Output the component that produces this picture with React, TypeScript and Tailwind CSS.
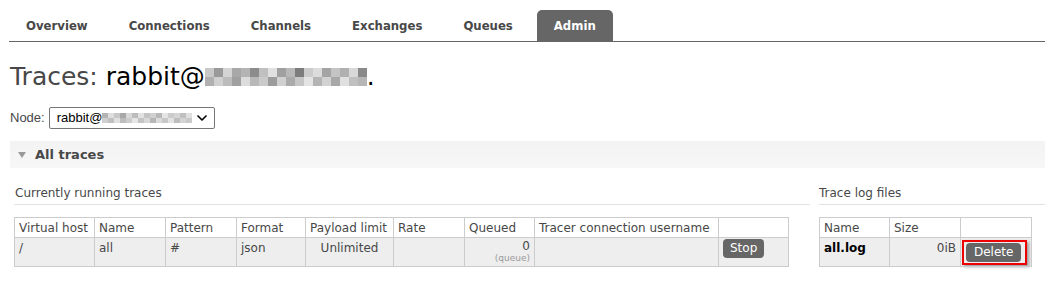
import { ChevronDown } from 'lucide-react';

const titleBlocks = [
  ['bg-[#c8c8c8]', 'bg-[#9a9a9a]', 'bg-[#d4d4d4]', 'bg-[#a8a8a8]', 'bg-[#b4b4b4]', 'bg-[#8c8c8c]', 'bg-[#c0c0c0]', 'bg-[#e0e0e0]', 'bg-[#a0a0a0]', 'bg-[#b8b8b8]', 'bg-[#7c7c7c]', 'bg-[#cccccc]', 'bg-[#dcdcdc]', 'bg-[#a4a4a4]', 'bg-[#c4c4c4]', 'bg-[#b0b0b0]', 'bg-[#d8d8d8]', 'bg-[#8a8a8a]'],
  ['bg-[#b0b0b0]', 'bg-[#d0d0d0]', 'bg-[#bcbcbc]', 'bg-[#a0a0a0]', 'bg-[#dcdcdc]', 'bg-[#b8b8b8]', 'bg-[#cacaca]', 'bg-[#9c9c9c]', 'bg-[#d0d0d0]', 'bg-[#aaaaaa]', 'bg-[#c6c6c6]', 'bg-[#e4e4e4]', 'bg-[#b4b4b4]', 'bg-[#d2d2d2]', 'bg-[#a8a8a8]', 'bg-[#e0e0e0]', 'bg-[#c0c0c0]', 'bg-[#b6b6b6]'],
];

const nodeBlocks = [
  ['bg-[#b4b4b4]', 'bg-[#dedede]', 'bg-[#c8c8c8]', 'bg-[#a8a8a8]', 'bg-[#d8d8d8]', 'bg-[#bcbcbc]', 'bg-[#e2e2e2]', 'bg-[#c4c4c4]', 'bg-[#d0d0d0]', 'bg-[#b8b8b8]', 'bg-[#e4e4e4]', 'bg-[#cccccc]', 'bg-[#d6d6d6]', 'bg-[#c0c0c0]', 'bg-[#e0e0e0]'],
  ['bg-[#d0d0d0]', 'bg-[#c0c0c0]', 'bg-[#e0e0e0]', 'bg-[#bcbcbc]', 'bg-[#cccccc]', 'bg-[#e6e6e6]', 'bg-[#c4c4c4]', 'bg-[#d8d8d8]', 'bg-[#b6b6b6]', 'bg-[#dadada]', 'bg-[#c8c8c8]', 'bg-[#e2e2e2]', 'bg-[#bebebe]', 'bg-[#d4d4d4]', 'bg-[#cacaca]'],
];

const tabs = ['Overview', 'Connections', 'Channels', 'Exchanges', 'Queues', 'Admin'];

const traceCols = [
  { label: 'Virtual host', w: 'w-[80px]' },
  { label: 'Name', w: 'w-[71px]' },
  { label: 'Pattern', w: 'w-[71px]' },
  { label: 'Format', w: 'w-[69px]' },
  { label: 'Payload limit', w: 'w-[88px]' },
  { label: 'Rate', w: 'w-[71px]' },
  { label: 'Queued', w: 'w-[70px]' },
  { label: 'Tracer connection username', w: 'w-[184px]' },
  { label: '', w: 'w-[70px]' },
];

function Pixelated({ rows, cell }: { rows: string[][]; cell: string }) {
  return (
    <span className="inline-flex flex-col align-middle">
      {rows.map((row, i) => (
        <span key={i} className="flex">
          {row.map((c, j) => (
            <span key={j} className={`${cell} ${c}`} />
          ))}
        </span>
      ))}
    </span>
  );
}

export default function App() {
  const th = 'border border-[#ccc] px-[4px] h-[20px] text-left font-normal text-[#484848] align-middle';
  const td = 'border border-[#ccc] px-[4px] pt-[1px] align-top h-[29px]';

  return (
    <div className="w-[1045px] h-[281px] overflow-hidden bg-white font-['DejaVu_Sans',Verdana,sans-serif] text-[12px] text-[#484848]">
      {/* Menu */}
      <div className="pt-[10px] pl-[9px]">
        <ul className="flex border-b border-[#666] h-[32px]">
          {tabs.map((t) => (
            <li
              key={t}
              className={
                t === 'Admin'
                  ? "mr-[7px] px-[17px] h-[31px] flex items-center rounded-t-[5px] bg-[#666] text-white font-bold text-[13px] font-['DejaVu_Sans_Condensed',sans-serif]"
                  : "mr-[7px] px-[17px] h-[31px] flex items-center text-[#484848] font-bold text-[13px] font-['DejaVu_Sans_Condensed',sans-serif]"
              }
            >
              {t}
            </li>
          ))}
        </ul>
      </div>

      {/* Title */}
      <h1 className="ml-[10px] mt-[20px] text-[25px] leading-[30px] text-[#484848] flex items-center">
        <span>Traces:&nbsp;</span>
        <span className="text-black">rabbit@</span>
        <Pixelated rows={titleBlocks} cell="w-[9px] h-[9px]" />
        <span className="text-black">.</span>
      </h1>

      {/* Node select */}
      <div className="ml-[10px] mt-[15px] flex items-center gap-[4px] text-[13px] font-['Liberation_Sans',Arial,sans-serif]">
        <span className="text-[#484848]">Node:</span>
        <div className="w-[166px] h-[22px] border border-[#767676] rounded-[2px] flex items-center pl-[7px] pr-[4px] text-black">
          <span>rabbit@</span>
          <Pixelated rows={nodeBlocks} cell="w-[6px] h-[5px]" />
          <ChevronDown className="ml-auto h-[16px] w-[16px] text-black" strokeWidth={2.5} />
        </div>
      </div>

      {/* Section header */}
      <div className="ml-[10px] mt-[12px] h-[27px] bg-gradient-to-b from-[#f3f3f3] to-[#f7f7f7] flex items-center">
        <svg width="10" height="8" viewBox="0 0 10 8" className="ml-[7px]">
          <path d="M1 1 L9 1 L5 7 Z" fill="#9a9a9a" />
        </svg>
        <span className="ml-[8px] font-bold text-[13px] text-[#484848]">All traces</span>
      </div>

      {/* Content */}
      <div className="flex mt-[17px] ml-[14px]">
        <div className="w-[796px]">
          <h3 className="text-[12px] pl-[1px] pb-[3px] border-b border-[#e2e2e2] leading-[16px]">Currently running traces</h3>
          <table className="mt-[12px] border-collapse text-[12px]">
            <thead>
              <tr className="bg-white">
                {traceCols.map((c, i) => (
                  <th key={i} className={`${th} ${c.w}`}>{c.label}</th>
                ))}
              </tr>
            </thead>
            <tbody>
              <tr className="bg-[#eee] text-[#484848]">
                <td className={td}>/</td>
                <td className={td}>all</td>
                <td className={td}>#</td>
                <td className={td}>json</td>
                <td className={`${td} text-center`}>Unlimited</td>
                <td className={td}></td>
                <td className={`${td} text-right leading-[14px]`}>
                  <div>0</div>
                  <div className="text-[9px] text-[#999] leading-[11px]">(queue)</div>
                </td>
                <td className={td}></td>
                <td className={`${td} pl-[4px] align-middle`}>
                  <button className="bg-[#666] text-white rounded-[4px] px-[7px] h-[19px] leading-[19px] text-[12px]">Stop</button>
                </td>
              </tr>
            </tbody>
          </table>
        </div>

        <div className="ml-[9px] flex-1">
          <h3 className="text-[12px] pb-[3px] border-b border-[#e2e2e2] leading-[16px]">Trace log files</h3>
          <table className="mt-[12px] border-collapse text-[12px]">
            <thead>
              <tr className="bg-white">
                <th className={`${th} w-[70px]`}>Name</th>
                <th className={`${th} w-[71px]`}>Size</th>
                <th className={`${th} w-[71px]`}></th>
              </tr>
            </thead>
            <tbody>
              <tr className="bg-[#eee]">
                <td className={`${td} font-bold text-black`}>all.log</td>
                <td className={`${td} text-right`}>0iB</td>
                <td className="border border-[#ccc] p-0 align-middle">
                  <div className="ml-[1px] w-[65px] h-[25px] border-2 border-[#e00] flex items-center pl-[2px] shadow-[2px_2px_3px_rgba(0,0,0,0.35)]">
                    <button className="bg-[#666] text-white rounded-[4px] px-[8px] h-[19px] leading-[19px] text-[12px]">Delete</button>
                  </div>
                </td>
              </tr>
            </tbody>
          </table>
        </div>
      </div>
    </div>
  );
}
